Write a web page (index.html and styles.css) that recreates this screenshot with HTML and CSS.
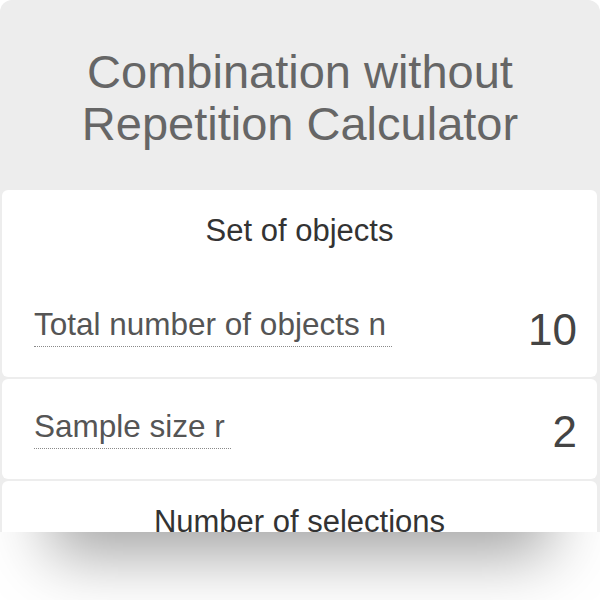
FILE: index.html
```html
<!DOCTYPE html>
<html lang="en">
<head>
<meta charset="utf-8">
<title>Combination without Repetition Calculator</title>
<link rel="stylesheet" href="styles.css">
</head>
<body>
  <div class="calc">
    <h1 class="calc-title">Combination without Repetition Calculator</h1>
    <div class="cards">
      <section class="card">
        <h2 class="card-head">Set of objects</h2>
        <div class="row">
          <span class="label">Total number of objects n</span>
          <span class="value">10</span>
        </div>
      </section>
      <section class="card">
        <div class="row">
          <span class="label">Sample size r</span>
          <span class="value">2</span>
        </div>
      </section>
      <section class="card">
        <h2 class="card-head">Number of selections</h2>
      </section>
    </div>
  </div>
</body>
</html>
```
FILE: styles.css
```css
html, body {
  margin: 0;
  padding: 0;
  background: #ffffff;
}

body {
  min-height: 600px;
  font-family: "Liberation Sans", Arial, sans-serif;
}

/* widget frame, cut off at the bottom with a soft drop shadow */
.calc {
  position: relative;
  width: 600px;
  height: 532px;
  box-sizing: border-box;
  overflow: hidden;
  background: #ededed;
  border-radius: 12px 12px 0 0;
  box-shadow: 0 73px 60px -50px rgba(0, 0, 0, 0.36);
}

.calc-title {
  margin: 0;
  padding: 46px 40px 40px;
  font-size: 47px;
  line-height: 52px;
  font-weight: normal;
  text-align: center;
  color: #666666;
}

.cards {
  display: flex;
  flex-direction: column;
  gap: 2px;
  padding: 0 3px 0 2px;
}

.card {
  background: #ffffff;
  border-radius: 6px;
}

.card-head {
  margin: 0;
  padding: 21px 20px 26px;
  font-size: 31px;
  line-height: 40px;
  font-weight: normal;
  text-align: center;
  color: #333333;
}

.row {
  display: flex;
  justify-content: space-between;
  align-items: flex-end;
  height: 100px;
  box-sizing: border-box;
  padding: 0 20px 30px 32px;
}

.label {
  font-size: 31.5px;
  line-height: 34px;
  padding: 0 6px 5px 0;
  color: #555555;
  border-bottom: 1px dotted #8a8a8a;
}

.value {
  font-size: 44px;
  line-height: 44px;
  margin-bottom: -5px;
  color: #444444;
}
```
